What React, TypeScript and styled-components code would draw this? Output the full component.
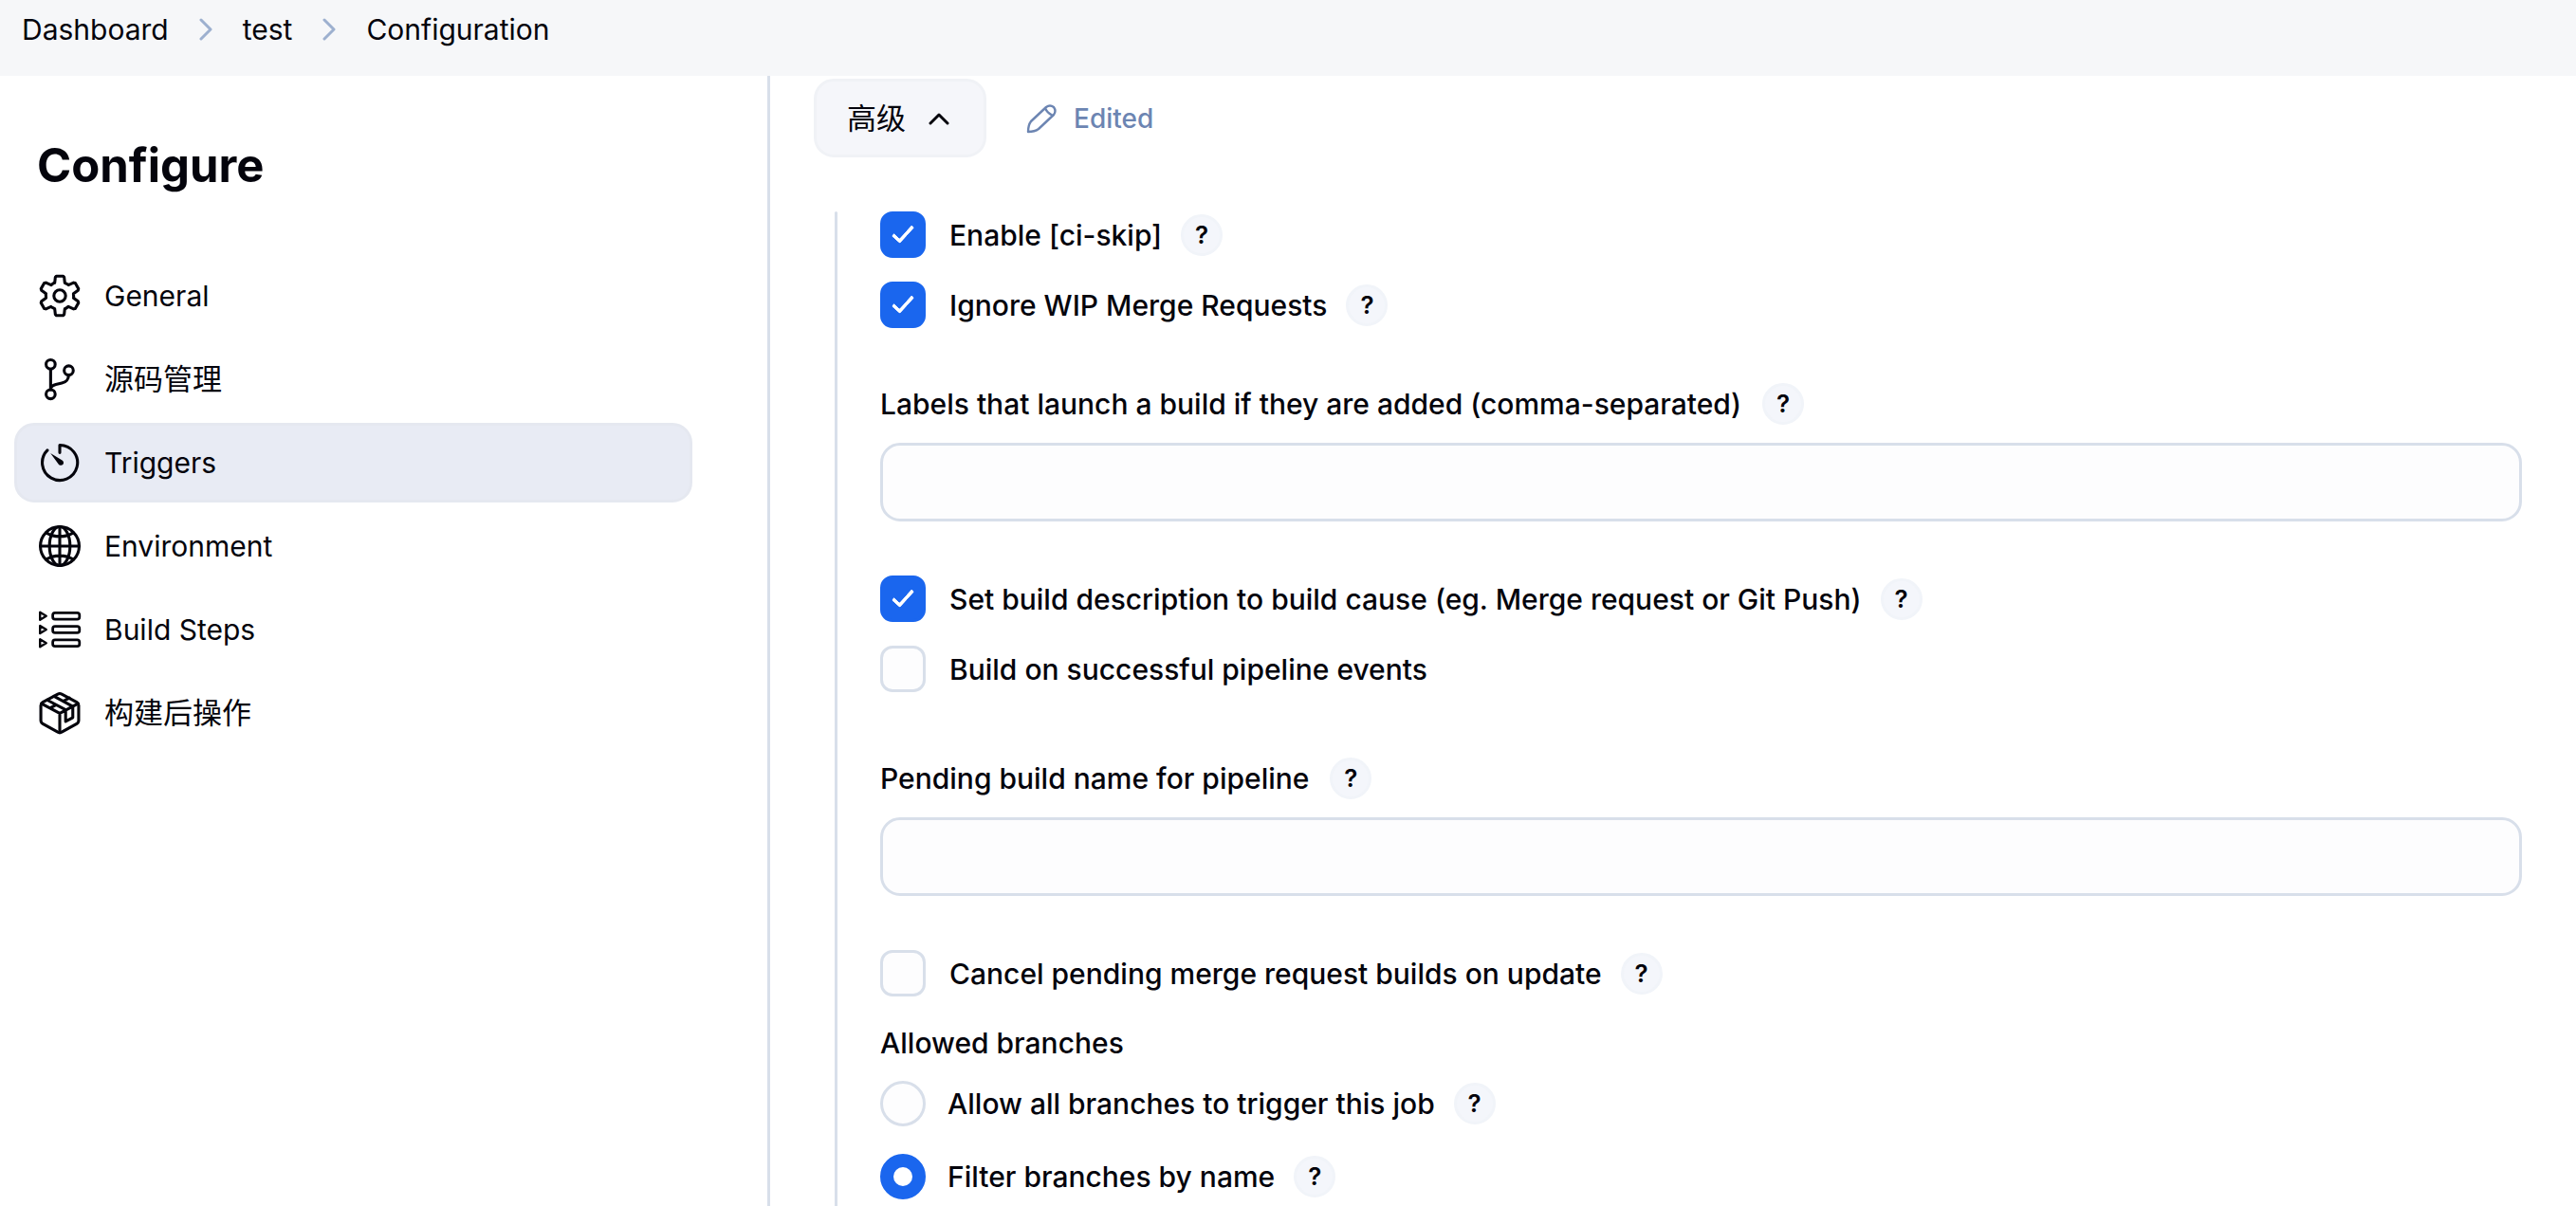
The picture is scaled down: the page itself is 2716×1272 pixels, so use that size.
import React from "react";
import styled, { createGlobalStyle } from "styled-components";

const font = `Inter, "Noto Sans CJK SC", "Liberation Sans", sans-serif`;
const c = {
  text: "#04040c",
  line: "#d8dfea",
  blue: "#1a66ee",
  field: "#fdfdfe",
  muted: "#6c85b2",
};

const Global = createGlobalStyle`
  *, *::before, *::after { box-sizing: border-box; }
  html { background: #fff; }
  body { margin: 0; font: 450 30px/44px ${font}; color: ${c.text}; overflow: hidden; }
  button, input { font: inherit; color: inherit; margin: 0; }
`;

const Page = styled.div`
  display: flex;
  flex-direction: column;
  height: 100vh;
`;

const Header = styled.header`
  flex: none;
  background: #f6f7f9;
`;

const Crumbs = styled.ol`
  display: flex;
  align-items: center;
  gap: 32px;
  list-style: none;
  margin: 0;
  padding: 9px 23px 27px;
  font-weight: 400;

  li { display: flex; align-items: center; gap: 32px; }
  a { color: inherit; text-decoration: none; }
  svg { display: block; }
`;

const Body = styled.div`
  flex: 1;
  min-height: 0;
  display: grid;
  grid-template-columns: 812px minmax(0, 1fr);
`;

const Sidebar = styled.aside`
  border-right: 3px solid ${c.line};
  padding: 63px 79px 0 15px;
`;

const Title = styled.h1`
  margin: 0 0 63px;
  padding-left: 24px;
  font-size: 49px;
  line-height: 64px;
  font-weight: 700;
`;

const Nav = styled.nav`
  display: flex;
  flex-direction: column;
  gap: 4px;
`;

const NavItem = styled.button<{ $active?: boolean; $cjk?: boolean }>`
  display: flex;
  align-items: center;
  gap: 25px;
  height: 84px;
  padding: 0 23px;
  border: 3px solid ${(p) => (p.$active ? "#e5e8f0" : "transparent")};
  border-radius: 21px;
  background: ${(p) => (p.$active ? "#e8ebf4" : "transparent")};
  font-size: ${(p) => (p.$cjk ? 31 : 30)}px;
  font-weight: 400;
  text-align: left;

  svg { flex: none; display: block; }
`;

const Main = styled.main`
  overflow: hidden;
  padding: 3px 57px 0 46px;
`;

const Toolbar = styled.div`
  display: flex;
  align-items: center;
  gap: 42px;
  margin-bottom: 57px;
`;

const AdvancedButton = styled.button`
  display: flex;
  align-items: center;
  gap: 24px;
  height: 83px;
  padding: 0 36px 0 32px;
  border: 3px solid #f0f2f6;
  border-radius: 21px;
  background: #f5f6fa;
  font-size: 31px;
  font-weight: 400;
`;

const Edited = styled.span`
  display: flex;
  align-items: center;
  gap: 18px;
  color: ${c.muted};
  font-size: 28px;
`;

const Section = styled.div`
  display: grid;
  grid-template-columns: 3px minmax(0, 1fr);
  column-gap: 45px;
  margin-left: 22px;
`;

const Rail = styled.div`
  border-radius: 2px;
  background: ${c.line};
`;

const Fields = styled.div`
  display: flex;
  flex-direction: column;
  padding-bottom: 57px;
`;

const Group = styled.div<{ $after?: number }>`
  display: flex;
  flex-direction: column;
  gap: 25px;
  margin-bottom: ${(p) => p.$after ?? 0}px;
`;

const Row = styled.div<{ $gap: number }>`
  display: flex;
  align-items: center;
  gap: ${(p) => p.$gap}px;
`;

const Choice = styled.label<{ $gap: number }>`
  display: flex;
  align-items: center;
  gap: ${(p) => p.$gap}px;
  height: 49px;
`;

const Check = styled.input`
  appearance: none;
  flex: none;
  display: grid;
  place-items: center;
  width: 48px;
  height: 49px;
  border: 3px solid ${c.line};
  border-radius: 13px;
  background: ${c.field};

  &:checked { border-color: ${c.blue}; background: ${c.blue}; }
  &:checked::after {
    content: "";
    width: 12px;
    height: 23px;
    margin-bottom: 6px;
    border: solid #fff;
    border-width: 0 4px 4px 0;
    border-radius: 2px;
    transform: rotate(42deg);
  }
`;

const Radio = styled.input`
  appearance: none;
  flex: none;
  width: 48px;
  height: 48px;
  border: 3px solid ${c.line};
  border-radius: 50%;
  background: ${c.field};

  &:checked { border: 14px solid ${c.blue}; background: #fff; }
`;

const Help = styled.button`
  flex: none;
  width: 44px;
  height: 44px;
  padding: 0;
  border: 3px solid #f1f4f9;
  border-radius: 50%;
  background: #f4f6fb;
  font-size: 26px;
  line-height: 36px;
  font-weight: 600;
`;

const FieldBlock = styled.div`
  display: flex;
  flex-direction: column;
  gap: 19px;
  margin-bottom: 57px;
`;

const TextField = styled.input`
  width: 100%;
  height: 83px;
  padding: 0 24px;
  border: 3px solid ${c.line};
  border-radius: 21px;
  background: ${c.field};
`;

const Branches = styled.fieldset`
  display: flex;
  flex-direction: column;
  gap: 28px;
  min-width: 0;
  margin: 0;
  padding: 0;
  border: 0;
`;

const Legend = styled.legend`
  padding: 0;
  margin-bottom: 17px;
`;

const Separator = () => (
  <svg width="14" height="24" viewBox="0 0 14 24" fill="none" stroke="#9db0cf" strokeWidth="3" strokeLinecap="round" strokeLinejoin="round" aria-hidden="true">
    <path d="M2 2l10 10L2 22" />
  </svg>
);

const Icon = ({ children }: { children: React.ReactNode }) => (
  <svg width="44" height="44" viewBox="0 0 512 512" fill="none" stroke="currentColor" strokeWidth="36" strokeLinecap="round" strokeLinejoin="round" overflow="visible" aria-hidden="true">
    {children}
  </svg>
);

// One tooth of the gear pointing up, relative to the centre; repeated six times round the hub.
const toothPoints = [[-62, -158], [-54, -228], [-40, -242], [40, -242], [54, -228], [62, -158]];

const gearPath =
  Array.from({ length: 6 }, (_, k) => {
    const a = (k * Math.PI) / 3;
    const turn = (x: number, y: number) =>
      `${Math.round(256 + x * Math.cos(a) - y * Math.sin(a))} ${Math.round(256 + x * Math.sin(a) + y * Math.cos(a))}`;
    const points = toothPoints.map(([x, y]) => turn(x, y));
    return `${k === 0 ? "M" : "L"}${points.join("L")}Q${turn(84, -147)} ${turn(108, -136)}`;
  }).join("") + "Z";

const GearIcon = () => (
  <Icon>
    <circle cx="256" cy="256" r="72" />
    <path d={gearPath} />
  </Icon>
);

const BranchIcon = () => (
  <Icon>
    <circle cx="144" cy="74" r="56" />
    <circle cx="144" cy="440" r="56" />
    <circle cx="366" cy="148" r="56" />
    <path d="M144 130v254M366 204c-4 60-24 84-84 98l-74 18q-50 12-64 46" />
  </Icon>
);

const TimerIcon = () => (
  <Icon>
    <path d="M104 104A216 216 0 1 0 256 40v92" />
    <path d="M142 140 286 226c20 14 22 40 8 54s-40 12-54-8z" fill="currentColor" stroke="none" />
  </Icon>
);

const GlobeIcon = () => (
  <Icon>
    <circle cx="256" cy="256" r="238" />
    <ellipse cx="256" cy="256" rx="126" ry="238" />
    <path d="M18 256h476M256 18v476M90 92c94 62 238 62 332 0M90 420c94-62 238-62 332 0" />
  </Icon>
);

const StepsIcon = () => (
  <Icon>
    {[90, 256, 422].map((y) => (
      <React.Fragment key={y}>
        <rect x="170" y={y - 40} width="328" height="80" rx="28" strokeWidth="32" />
        <path d={`M14 ${y - 46}v92l76-46z`} strokeWidth="28" />
      </React.Fragment>
    ))}
  </Icon>
);

const PackageIcon = () => (
  <Icon>
    <path d="M232 24q24-12 48 0l184 100q24 14 24 40v184q0 26-24 40L280 490q-24 12-48 0L48 388q-24-14-24-40V164q0-26 24-40z" />
    <path d="M32 140l224 120 224-120M256 260v236M100 96l228 122v142l88-48V176L186 50M136 196l76-40M298 112l76-40" />
  </Icon>
);

const ChevronUp = () => (
  <svg width="22" height="14" viewBox="0 0 22 14" fill="none" stroke="currentColor" strokeWidth="3" strokeLinecap="round" strokeLinejoin="round" aria-hidden="true">
    <path d="M2 12l9-9 9 9" />
  </svg>
);

const Pencil = () => (
  <svg width="32" height="32" viewBox="0 0 32 32" fill="none" stroke="currentColor" strokeWidth="2.4" strokeLinecap="round" strokeLinejoin="round" aria-hidden="true">
    <path d="M2 30q0-7 3-11L21 4q4-3 8 0 3 4 0 8L13 27q-4 3-11 3zM20 5q2 5 8 8" />
  </svg>
);

const navItems = [
  { label: "General", icon: <GearIcon /> },
  { label: "源码管理", icon: <BranchIcon />, cjk: true },
  { label: "Triggers", icon: <TimerIcon />, active: true },
  { label: "Environment", icon: <GlobeIcon /> },
  { label: "Build Steps", icon: <StepsIcon /> },
  { label: "构建后操作", icon: <PackageIcon />, cjk: true },
];

const HelpButton = ({ topic }: { topic: string }) => (
  <Help type="button" aria-label={`Help for ${topic}`}>?</Help>
);

const CheckRow = ({ label, checked, help }: { label: string; checked?: boolean; help?: boolean }) => (
  <Row $gap={20}>
    <Choice $gap={25}>
      <Check type="checkbox" defaultChecked={checked} />
      {label}
    </Choice>
    {help && <HelpButton topic={label} />}
  </Row>
);

const RadioRow = ({ label, checked }: { label: string; checked?: boolean }) => (
  <Row $gap={20}>
    <Choice $gap={23}>
      <Radio type="radio" name="branches" defaultChecked={checked} />
      {label}
    </Choice>
    <HelpButton topic={label} />
  </Row>
);

const TextRow = ({ id, label }: { id: string; label: string }) => (
  <FieldBlock>
    <Row $gap={22}>
      <label htmlFor={id}>{label}</label>
      <HelpButton topic={label} />
    </Row>
    <TextField id={id} type="text" />
  </FieldBlock>
);

export default function App() {
  return (
    <Page>
      <Global />
      <Header>
        <Crumbs>
          <li><a href="#dashboard">Dashboard</a><Separator /></li>
          <li><a href="#test">test</a><Separator /></li>
          <li>Configuration</li>
        </Crumbs>
      </Header>
      <Body>
        <Sidebar>
          <Title>Configure</Title>
          <Nav>
            {navItems.map((n) => (
              <NavItem key={n.label} type="button" $active={n.active} $cjk={n.cjk}>
                {n.icon}
                {n.label}
              </NavItem>
            ))}
          </Nav>
        </Sidebar>
        <Main>
          <Toolbar>
            <AdvancedButton type="button" aria-expanded="true">
              高级
              <ChevronUp />
            </AdvancedButton>
            <Edited><Pencil />Edited</Edited>
          </Toolbar>
          <Section>
            <Rail />
            <Fields>
              <Group $after={58}>
                <CheckRow label="Enable [ci-skip]" checked help />
                <CheckRow label="Ignore WIP Merge Requests" checked help />
              </Group>
              <TextRow id="labels" label="Labels that launch a build if they are added (comma-separated)" />
              <Group $after={69}>
                <CheckRow label="Set build description to build cause (eg. Merge request or Git Push)" checked help />
                <CheckRow label="Build on successful pipeline events" />
              </Group>
              <TextRow id="pending" label="Pending build name for pipeline" />
              <Group $after={27}>
                <CheckRow label="Cancel pending merge request builds on update" help />
              </Group>
              <Branches>
                <Legend>Allowed branches</Legend>
                <RadioRow label="Allow all branches to trigger this job" />
                <RadioRow label="Filter branches by name" checked />
              </Branches>
            </Fields>
          </Section>
        </Main>
      </Body>
    </Page>
  );
}
